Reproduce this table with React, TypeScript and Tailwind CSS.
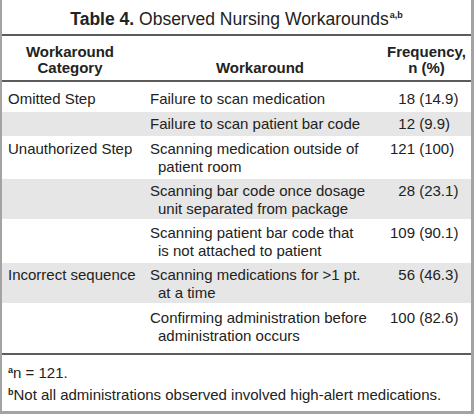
const rows = [
  { cat: 'Omitted Step', lines: ['Failure to scan medication'], n: '18', pct: '14.9', gray: false, pad: 'pt-[8px] pb-[4px]' },
  { cat: '', lines: ['Failure to scan patient bar code'], n: '12', pct: '9.9', gray: true, pad: 'pt-[3px] pb-[3px]' },
  { cat: 'Unauthorized Step', lines: ['Scanning medication outside of', 'patient room'], n: '121', pct: '100', gray: false, pad: 'pt-[4px] pb-[3px]' },
  { cat: '', lines: ['Scanning bar code once dosage', 'unit separated from package'], n: '28', pct: '23.1', gray: true, pad: 'pt-[3px] pb-[1px]' },
  { cat: '', lines: ['Scanning patient bar code that', 'is not attached to patient'], n: '109', pct: '90.1', gray: false, pad: 'pt-[5px] pb-[3px]' },
  { cat: 'Incorrect sequence', lines: ['Scanning medications for >1 pt.', 'at a time'], n: '56', pct: '46.3', gray: true, pad: 'pt-[3px] pb-[1px]' },
  { cat: '', lines: ['Confirming administration before', 'administration occurs'], n: '100', pct: '82.6', gray: false, pad: 'pt-[6px] pb-[8px]' },
]

export default function App() {
  return (
    <div
      className="flex h-[414px] w-[474px] flex-col border-b-[3px] border-l-[2px] border-r-[3px] border-[#a3a3a3] bg-white text-[#222]"
      style={{ fontFamily: '"Liberation Sans", Arial, sans-serif' }}
    >
      {/* title */}
      <div className="h-[36px] border-b-2 border-[#5c5c5c] pt-[9px] text-center text-[17.5px] leading-[20px]">
        <span className="font-bold">Table 4.</span> Observed Nursing Workarounds
        <span className="relative -top-[7px] ml-px text-[9px] font-bold">a,b</span>
      </div>

      {/* header */}
      <div className="grid grid-cols-[136px_244px_1fr] border-b-2 border-[#5c5c5c] pt-[8px] pb-[4px] text-[15px] font-bold leading-[16px]">
        <div className="text-center">
          Workaround
          <br />
          Category
        </div>
        <div className="flex items-end justify-center">Workaround</div>
        <div className="text-center">
          Frequency,
          <br />
          n (%)
        </div>
      </div>

      {/* body */}
      <div className="border-b-2 border-[#5c5c5c] text-[15px] leading-[18px]">
        {rows.map((r, i) => (
          <div
            key={i}
            className={`grid grid-cols-[148px_240px_1fr] ${r.pad} ${r.gray ? 'bg-[#e6e6e6]' : ''}`}
          >
            <div className="pl-[6px]">{r.cat}</div>
            <div className="pl-2 -indent-2">
              {r.lines.map((l, j) => (
                <span key={j}>
                  {j > 0 && <br />}
                  {l}
                </span>
              ))}
            </div>
            <div className="flex">
              <span className="w-[25px] text-right">{r.n}</span>
              <span>&nbsp;({r.pct})</span>
            </div>
          </div>
        ))}
      </div>

      {/* footnotes */}
      <div className="flex-1 pt-[8px] pl-[6px] text-[15px] leading-[20px]">
        <div>
          <span className="relative -top-[5px] text-[9px] font-bold">a</span>n = 121.
        </div>
        <div>
          <span className="relative -top-[5px] text-[9px] font-bold">b</span>Not all administrations observed involved high-alert medications.
        </div>
      </div>
    </div>
  )
}
